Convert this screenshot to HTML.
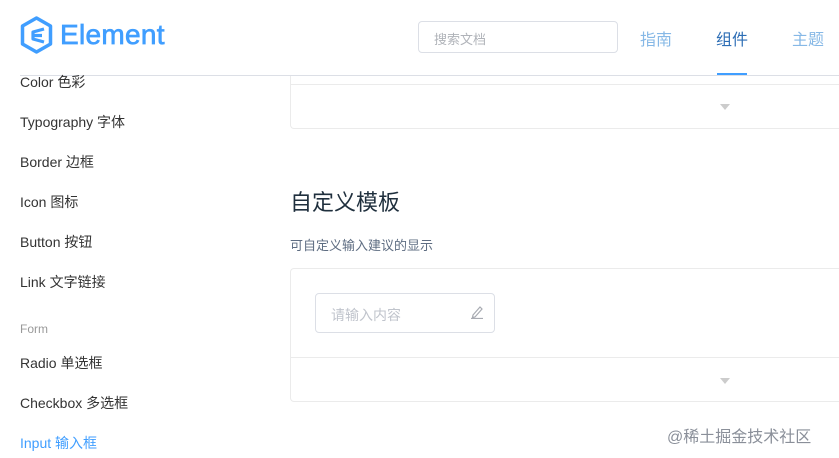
<!DOCTYPE html>
<html><head><meta charset="utf-8"><style>
*{margin:0;padding:0;box-sizing:border-box}
body{width:839px;height:458px;overflow:hidden;background:#fff;font-family:"Liberation Sans","Noto Sans CJK SC",sans-serif;position:relative}
.a{position:absolute}
.side{font-size:14px;color:#333}
</style></head><body>
<div class="a" style="left:20px;top:75px;width:819px;height:1px;background:#dcdfe6"></div>
<svg class="a" style="left:19px;top:15px" width="35" height="40" viewBox="0 0 35 40"><path d="M17.5 3 L31.5 11 V29 L17.5 37 L3.5 29 V11 Z" fill="none" stroke="#409eff" stroke-width="3.5" stroke-linejoin="round"/><path d="M25 14 L14 17 V24 L25 27 M14 20.5 L23 20.5" fill="none" stroke="#409eff" stroke-width="3.2" stroke-linejoin="round"/></svg>
<div class="a" style="left:60px;top:19px;font-size:28px;color:#409eff;-webkit-text-stroke:0.7px #409eff;letter-spacing:0.3px">Element</div>
<div class="a" style="left:418px;top:21px;width:200px;height:32px;border:1px solid #dcdfe6;border-radius:4px;font-size:13px;color:#b0b3b9;padding:7px 0 0 15px">搜索文档</div>
<div class="a" style="left:640px;top:26px;font-size:16px;color:#86b8e6">指南</div>
<div class="a" style="left:716px;top:26px;font-size:16px;color:#2c6db5">组件</div>
<div class="a" style="left:717px;top:73px;width:30px;height:2px;background:#409eff"></div>
<div class="a" style="left:792px;top:26px;font-size:16px;color:#86b8e6">主题</div>

<div class="a side" style="left:20px;top:72px">Color 色彩</div>
<div class="a side" style="left:20px;top:112px">Typography 字体</div>
<div class="a side" style="left:20px;top:152px">Border 边框</div>
<div class="a side" style="left:20px;top:192px">Icon 图标</div>
<div class="a side" style="left:20px;top:232px">Button 按钮</div>
<div class="a side" style="left:20px;top:272px">Link 文字链接</div>
<div class="a" style="left:20px;top:322px;font-size:12px;color:#999">Form</div>
<div class="a side" style="left:20px;top:353px">Radio 单选框</div>
<div class="a side" style="left:20px;top:393px">Checkbox 多选框</div>
<div class="a side" style="left:20px;top:433px;color:#409eff">Input 输入框</div>

<div class="a" style="left:290px;top:76px;width:560px;height:53px;border:1px solid #ebebeb;border-top:none;border-radius:0 0 4px 4px"></div>
<div class="a" style="left:291px;top:84px;width:548px;height:1px;background:#ebebeb"></div>
<div class="a" style="left:720px;top:104px;width:0;height:0;border-left:5px solid transparent;border-right:5px solid transparent;border-top:6px solid #ccc"></div>

<div class="a" style="left:290px;top:185px;font-size:22px;color:#1f2f3d">自定义模板</div>
<div class="a" style="left:290px;top:235px;font-size:13px;color:#5e6d82">可自定义输入建议的显示</div>

<div class="a" style="left:290px;top:268px;width:560px;height:134px;border:1px solid #ebebeb;border-radius:4px"></div>
<div class="a" style="left:291px;top:357px;width:548px;height:1px;background:#ebebeb"></div>
<div class="a" style="left:315px;top:293px;width:180px;height:40px;border:1px solid #dcdfe6;border-radius:4px;font-size:14px;color:#c0c4cc;padding:11px 0 0 15px">请输入内容</div>
<svg class="a" style="left:470px;top:305px" width="14" height="14" viewBox="0 0 14 14"><path d="M3 10 L10 2 L12 4 L5 12 L2.5 12.5 Z M1 13.5 H13" fill="none" stroke="#a8abb2" stroke-width="1.2"/></svg>
<div class="a" style="left:720px;top:378px;width:0;height:0;border-left:5px solid transparent;border-right:5px solid transparent;border-top:6px solid #ccc"></div>

<div class="a" style="left:667px;top:423px;font-size:16px;color:#8a8f99">@稀土掘金技术社区</div>
</body></html>
